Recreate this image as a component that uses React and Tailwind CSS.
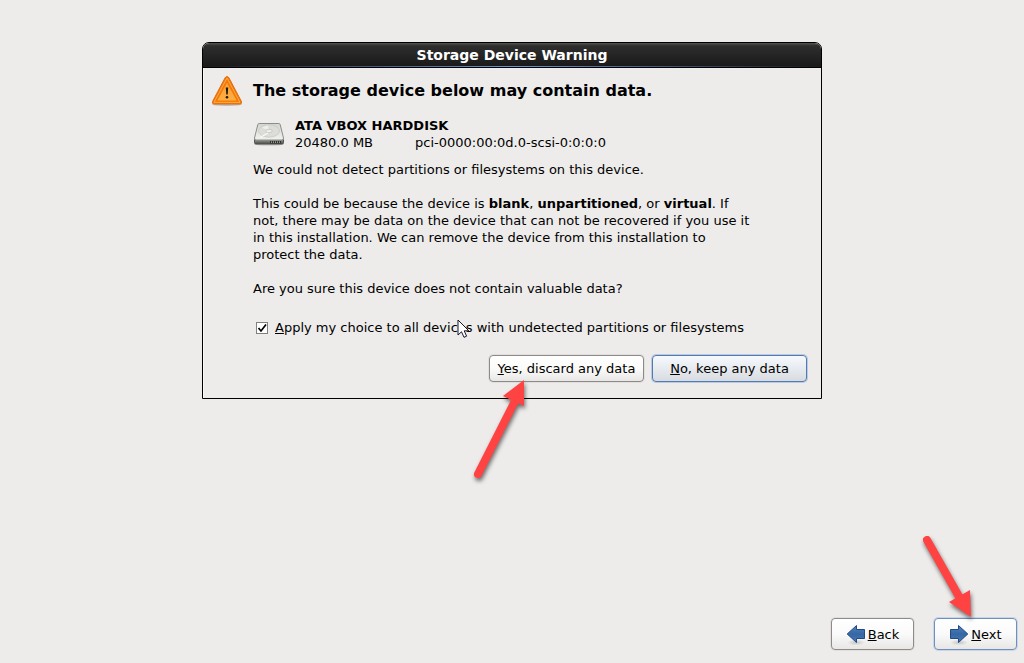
import { useState } from "react";

const WarningIcon = () => (
  <svg width="32" height="32" viewBox="0 0 32 32" aria-hidden="true">
    <defs>
      <linearGradient id="warnFill" x1="0" y1="0" x2="0" y2="1">
        <stop offset="0" stopColor="#f8a040" />
        <stop offset="1" stopColor="#fcaf3e" />
      </linearGradient>
    </defs>
    <ellipse cx="16" cy="28.6" rx="15" ry="1.4" fill="#000" opacity="0.2" />
    <path d="M14.2 1.6Q16 -0.8 17.8 1.6L30.4 25.4Q31.4 28 28.6 28H3.4Q0.6 28 1.6 25.4Z" fill="#f57900" stroke="#e06c0c" strokeWidth="1" />
    <path d="M16 2L29 26.4H3Z" fill="none" stroke="#fba95a" strokeWidth="1" strokeLinejoin="round" />
    <path d="M16 6.8L25.6 24.4H6.4Z" fill="url(#warnFill)" />
    <path d="M14.8 11.4h2.4l-0.5 7.2h-1.4z" fill="#1c1a14" />
    <circle cx="16" cy="21.2" r="1.3" fill="#1c1a14" />
  </svg>
);

const DiskIcon = () => (
  <svg width="32" height="24" viewBox="0 0 32 24" aria-hidden="true">
    <defs>
      <linearGradient id="diskTop" x1="0" y1="0" x2="0" y2="1">
        <stop offset="0" stopColor="#d3d5d0" />
        <stop offset="1" stopColor="#f1f2ef" />
      </linearGradient>
      <linearGradient id="diskFront" x1="0" y1="0" x2="0" y2="1">
        <stop offset="0" stopColor="#9b9e99" />
        <stop offset="1" stopColor="#454844" />
      </linearGradient>
    </defs>
    <ellipse cx="16" cy="22" rx="15" ry="1.6" fill="#000" opacity="0.2" />
    <path d="M1.5 17.5H30.5V20.5Q30.5 22 29 22H3Q1.5 22 1.5 20.5Z" fill="url(#diskFront)" stroke="#555753" strokeWidth="1" />
    <path d="M6.2 1.5H25.8Q26.9 1.5 27.2 2.6L30.5 16Q30.7 18 29 18H3Q1.3 18 1.5 16L4.8 2.6Q5.1 1.5 6.2 1.5Z" fill="url(#diskTop)" stroke="#8a8d88" strokeWidth="1" />
    <ellipse cx="16" cy="9" rx="10.5" ry="6.2" fill="#dcddd9" stroke="#c6c9c3" strokeWidth="0.8" />
    <path d="M9 5.5A10 6 0 0 1 15 3.5L16 9Z" fill="#eeeeec" />
    <ellipse cx="16" cy="9" rx="3.2" ry="1.8" fill="#eeeeec" stroke="#b9bcb6" strokeWidth="0.7" />
    <path d="M7 15.5L15 11" stroke="#f9f9f8" strokeWidth="1.2" />
    <path d="M17 20.2h11" stroke="#30322f" strokeWidth="2.4" />
    <path d="M18 20.2h9" stroke="#babdb6" strokeWidth="1.2" strokeDasharray="1 1" />
  </svg>
);

const ArrowIcon = ({ direction }) => (
  <svg className="overflow-visible" width="20" height="20" viewBox="0 0 20 20" aria-hidden="true">
    <defs>
      <linearGradient id={`arrow-${direction}`} x1="0" y1="0" x2="0" y2="1">
        <stop offset="0" stopColor="#5484bd" />
        <stop offset="0.5" stopColor="#3567a4" />
        <stop offset="1" stopColor="#4a7ab5" />
      </linearGradient>
      <radialGradient id={`shade-${direction}`}>
        <stop offset="0" stopColor="#000" stopOpacity="0.18" />
        <stop offset="1" stopColor="#000" stopOpacity="0" />
      </radialGradient>
    </defs>
    <ellipse cx="10" cy="18.5" rx="9" ry="3" fill={`url(#shade-${direction})`} />
    <path
      d={
        direction === "left"
          ? "M10.5 1.5V5.5H18.5V14.5H10.5V18.5L1.2 10Z"
          : "M9.5 1.5V5.5H1.5V14.5H9.5V18.5L18.8 10Z"
      }
      fill={`url(#arrow-${direction})`}
      stroke="#204a87"
      strokeWidth="1"
      strokeLinejoin="round"
    />
  </svg>
);

// Red pointer that lies over the page, dropped on top of a button
const Pointer = ({ className, width, height, line, head }) => (
  <svg
    className={`pointer-events-none absolute z-10 max-w-none drop-shadow-[1px_3px_2px_rgba(0,0,0,0.55)] ${className}`}
    width={width}
    height={height}
    viewBox={`0 0 ${width} ${height}`}
    aria-hidden="true"
  >
    <path d={line} stroke="#ff4343" strokeWidth="8" strokeLinecap="round" />
    <path d={head} fill="#ff4343" />
  </svg>
);

const MouseCursor = () => (
  <svg className="pointer-events-none absolute top-0 left-[182px]" width="13" height="20" viewBox="0 0 13 20" aria-hidden="true">
    <path d="M1 1V16L4.5 12.8L7 18.3L9.6 17.2L7.2 11.8H11.8Z" fill="#fff" stroke="#14142c" strokeWidth="1" />
  </svg>
);

const App = () => {
  const [applyAll, setApplyAll] = useState(true);

  return (
    <div className="flex min-h-screen flex-col justify-between overflow-hidden bg-[#edeceb] font-['DejaVu_Sans',sans-serif] text-[13px] leading-[17px] text-black">
      <main className="px-4 pt-[42px]">
        <section
          aria-labelledby="dialog-title"
          className="mx-auto w-full max-w-[620px] rounded-t-[7px] border border-black"
        >
          <header className="relative rounded-t-[6px] border-b border-black bg-linear-to-b from-[#555651] via-[#2e2e2e] via-12% to-[#191919] px-4 pt-1 pb-1 text-center">
            <h1 id="dialog-title" className="text-sm leading-4 font-bold text-white">Storage Device Warning</h1>
            <div className="absolute inset-x-0 bottom-0 h-px bg-linear-to-r from-transparent via-[#6c94d4] to-transparent" />
          </header>

          <div className="flex gap-2.5 border-l border-[#f8f8f7] pt-2 pr-3.5 pb-4 pl-[7px]">
            <div className="shrink-0">
              <WarningIcon />
            </div>

            <div className="min-w-0 grow">
              <h2 className="pt-[5px] text-base leading-5 font-bold">The storage device below may contain data.</h2>

              <div className="mt-4 flex items-center gap-2.5">
                <DiskIcon />
                <div>
                  <p className="font-bold">ATA VBOX HARDDISK</p>
                  <p className="flex">
                    <span className="w-[120px]">20480.0 MB</span>
                    <span>pci-0000:00:0d.0-scsi-0:0:0:0</span>
                  </p>
                </div>
              </div>

              <div className="mt-2.5 flex max-w-[500px] flex-col gap-[17px]">
                <p>We could not detect partitions or filesystems on this device.</p>
                <p>
                  This could be because the device is <b>blank</b>, <b>unpartitioned</b>, or <b>virtual</b>. If
                  not, there may be data on the device that can not be recovered if you use it in this
                  installation. We can remove the device from this installation to protect the data.
                </p>
                <p>Are you sure this device does not contain valuable data?</p>
              </div>

              <div className="mt-[22px] flex items-center gap-[7px] pl-[3px]">
                <span className="relative flex">
                  <input
                    id="apply-all"
                    type="checkbox"
                    checked={applyAll}
                    onChange={(e) => setApplyAll(e.target.checked)}
                    className="size-3 appearance-none border border-[#80807e] bg-white"
                  />
                  {applyAll && (
                    <svg className="pointer-events-none absolute inset-0" width="12" height="12" viewBox="0 0 12 12" aria-hidden="true">
                      <path d="M2.5 6L5 9L10 2.5" fill="none" stroke="#000" strokeWidth="1.7" />
                    </svg>
                  )}
                </span>
                <label htmlFor="apply-all" className="relative">
                  <u>A</u>pply my choice to all devices with undetected partitions or filesystems
                  <MouseCursor />
                </label>
              </div>

              <div className="mt-[19px] flex justify-end gap-2">
                <div className="relative">
                  <button
                    type="button"
                    className="h-[27px] w-[155px] rounded-[4px] border border-[#8d8a87] bg-linear-to-b from-white via-[#fbfbfa] to-[#e8e7e6] shadow-[0_0_0_1px_#e0dfde]"
                  >
                    <u>Y</u>es, discard any data
                  </button>
                  <Pointer
                    className="top-5 -left-[22px]"
                    width={72}
                    height={120}
                    line="M11 99L50 22"
                    head="M57 5L36 21L57 31Z"
                  />
                </div>
                <button
                  type="button"
                  className="h-[27px] w-[155px] rounded-[4px] border border-[#527bb0] bg-linear-to-b from-[#f6f9fd] to-[#d8dce1] shadow-[0_0_0_1px_#b9cae2]"
                >
                  <u>N</u>o, keep any data
                </button>
              </div>
            </div>
          </div>
        </section>
      </main>

      <footer className="flex justify-end gap-5 pr-[7px] pb-[13px]">
        <button
          type="button"
          className="flex h-8 w-[83px] items-center justify-center gap-0.5 rounded-[4px] border border-[#8d8a87] bg-linear-to-b from-white via-[#fafafa] to-[#e8e7e6] shadow-[0_0_0_1px_#e0dfde]"
        >
          <ArrowIcon direction="left" />
          <span><u>B</u>ack</span>
        </button>
        <div className="relative">
          <button
            type="button"
            className="flex h-8 w-[83px] items-center justify-center gap-0.5 rounded-[4px] border border-[#6f90bd] bg-linear-to-b from-white via-[#fafafa] to-[#e8e7e6] shadow-[0_0_0_1px_#c9d6e8]"
          >
            <ArrowIcon direction="right" />
            <span><u>N</u>ext</span>
          </button>
          <Pointer
            className="-top-[88px] -left-[17px]"
            width={64}
            height={100}
            line="M10 10L44 70"
            head="M54 87L32 72L53 60Z"
          />
        </div>
      </footer>
    </div>
  );
};

export default App;
